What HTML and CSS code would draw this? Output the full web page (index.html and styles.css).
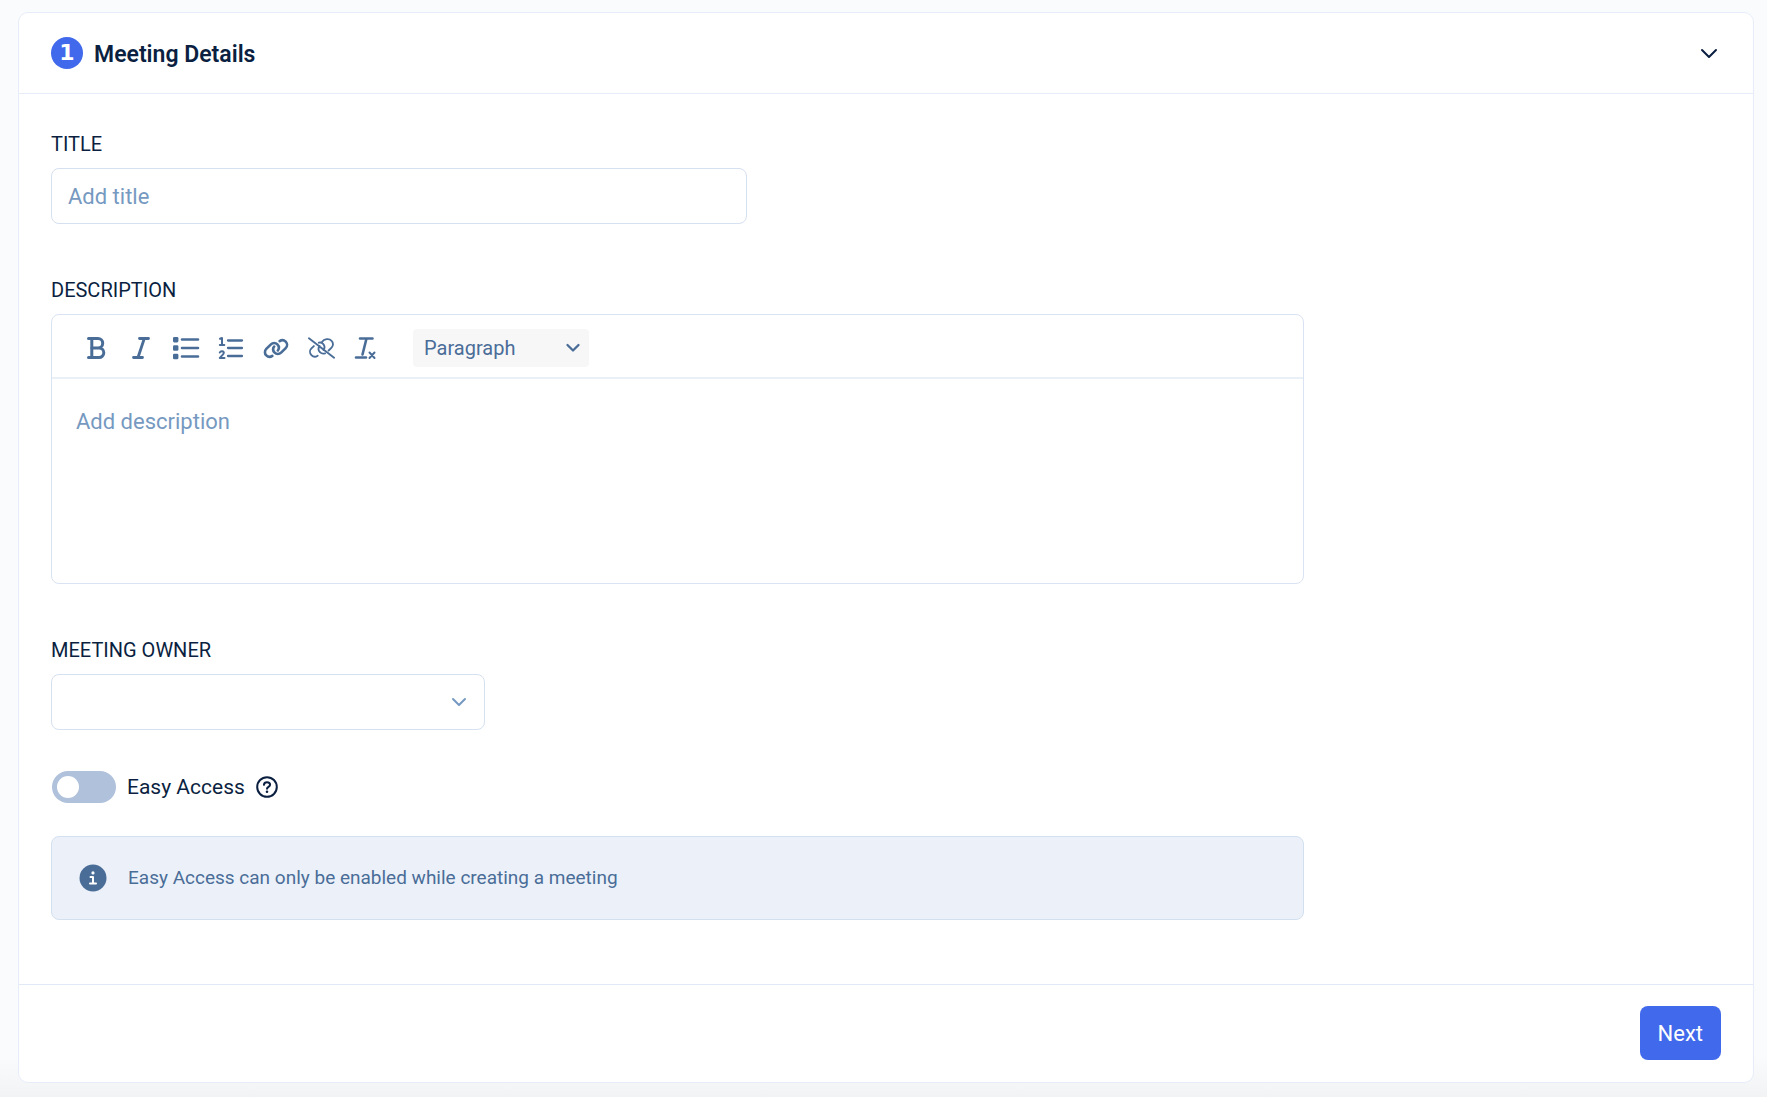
FILE: index.html
```html
<!DOCTYPE html>
<html lang="en">
<head>
<meta charset="utf-8">
<meta name="viewport" content="width=device-width, initial-scale=1">
<title>Meeting Details</title>
<link rel="stylesheet" href="styles.css">
</head>
<body>
<form class="card">
  <header class="card-header">
    <span class="step">1</span>
    <h1 class="card-title">Meeting Details</h1>
    <button class="icon-button collapse" type="button" aria-label="Collapse section">
      <svg width="24" height="24" viewBox="0 0 24 24" stroke-width="2"><path d="M5 9l7 7 7-7"/></svg>
    </button>
  </header>

  <div class="card-body">
    <div class="field">
      <label class="label" for="title">TITLE</label>
      <input class="control title-input" id="title" type="text" placeholder="Add title">
    </div>

    <div class="field">
      <label class="label" for="description">DESCRIPTION</label>
      <div class="editor">
        <div class="toolbar">
          <button class="icon-button tool" type="button" aria-label="Bold">
            <svg width="32" height="32" viewBox="0 0 32 32" stroke-width="3"><path d="M8.500 6.500H18a4.700 4.700 0 0 1 0 9.400H11.500M18 15.900h1a4.800 4.800 0 0 1 0 9.600H8.500M11.800 6.500v19"/></svg>
          </button>
          <button class="icon-button tool" type="button" aria-label="Italic">
            <svg width="32" height="32" viewBox="0 0 32 32" stroke-width="2.800"><path d="M14.500 6.500h9M8.500 25.500h9M19.300 6.500l-6.300 19"/></svg>
          </button>
          <button class="icon-button tool" type="button" aria-label="Bulleted list">
            <svg width="32" height="32" viewBox="0 0 32 32" stroke-width="2.600"><path d="M12 7.500h16M12 16h16M12 24.500h16"/><g fill="currentColor" stroke="none"><rect x="3" y="5" width="5.400" height="5.400" rx="1.300"/><rect x="3" y="13.300" width="5.400" height="5.400" rx="1.300"/><rect x="3" y="21.800" width="5.400" height="5.400" rx="1.300"/></g></svg>
          </button>
          <button class="icon-button tool" type="button" aria-label="Numbered list">
            <svg width="32" height="32" viewBox="0 0 32 32" stroke-width="2.300"><path d="M13 8.500h14M13 16h14M13 24h14"/><path stroke-width="2" d="M5 6.800l2-.800v7M4.800 13h4.500M4.800 20.500c.8-2 4.200-1.700 4 .5-.1 1.300-2.200 2.800-4 5h4.700"/></svg>
          </button>
          <button class="icon-button tool" type="button" aria-label="Insert link">
            <svg width="26" height="21" viewBox="0 0 640 512" stroke-width="64"><path d="M410 74c46-33 109-28 149 12 44 44 44 115 0 159L445 357c-44 44-115 44-159 0-40-40-45-103-12-149"/><path d="M230 438c-46 33-109 28-149-12-44-44-44-115 0-159L195 155c44-44 115-44 159 0 40 40 45 103 12 149"/></svg>
          </button>
          <button class="icon-button tool" type="button" aria-label="Remove link">
            <svg width="27" height="22" viewBox="0 0 640 512" stroke-width="44"><path d="M330 116c52-80 170-96 229-30 44 44 44 115 0 159l-70 70M405 385c-48 12-92 4-119-28-40-40-45-103-12-149M230 438c-46 33-109 28-149-12-44-44-44-115 0-159l58-57M258 130c40-12 76 0 96 25 40 40 45 103 12 149M22 24l596 464"/></svg>
          </button>
          <button class="icon-button tool" type="button" aria-label="Clear formatting">
            <svg width="32" height="32" viewBox="0 0 32 32" stroke-width="2.600"><path d="M10 6.500h12.500M6 25.500h10M16.500 6.500l-4 16"/><path stroke-width="2" d="M19.500 20.500l5 5.500M24.500 20.500l-5 5.500"/></svg>
          </button>
          <span class="style-picker">
            <select class="style-select" aria-label="Text style"><option>Paragraph</option></select>
            <svg class="select-arrow" width="16" height="16" viewBox="0 0 16 16" stroke-width="2.300"><path d="M2.500 5l5.500 5.500L13.500 5"/></svg>
          </span>
        </div>
        <textarea class="editor-text" id="description" placeholder="Add description"></textarea>
      </div>
    </div>

    <div class="field">
      <label class="label" for="owner">MEETING OWNER</label>
      <span class="owner-picker">
        <select class="control owner-select" id="owner"><option></option></select>
        <svg class="select-arrow" width="16" height="16" viewBox="0 0 16 16" stroke-width="2"><path d="M2 5l6 6 6-6"/></svg>
      </span>
    </div>

    <div class="access">
      <input class="switch" id="easy-access" type="checkbox" role="switch">
      <label class="access-label" for="easy-access">Easy Access</label>
      <button class="icon-button help" type="button" aria-label="About Easy Access">
        <svg width="22" height="22" viewBox="0 0 22 22" stroke-width="2"><circle cx="11" cy="11" r="9.800"/><path d="M7.900 8.800c.2-1.700 1.300-2.500 3.100-2.500 1.900 0 3.100 1 3.100 2.500 0 2-3.100 2.100-3.100 4"/><circle cx="11" cy="15.800" r="1.300" fill="currentColor" stroke="none"/></svg>
      </button>
    </div>

    <div class="notice">
      <svg width="28" height="28" viewBox="0 0 28 28" stroke-width="2"><circle cx="14" cy="14" r="13.500" fill="currentColor" stroke="none"/><g class="notice-mark"><path d="M11.500 13H14v6.500M11 19.500h6"/><circle cx="14" cy="8.900" r="1.600"/></g></svg>
      <p class="notice-text">Easy Access can only be enabled while creating a meeting</p>
    </div>
  </div>

  <footer class="card-footer">
    <button class="next" type="button">Next</button>
  </footer>
</form>
</body>
</html>
```
FILE: styles.css
```css
* {
  box-sizing: border-box;
}

html {
  min-height: 100%;
  background: linear-gradient(to top, #f2f3f5, #fafbfd 40px);
}

body {
  margin: 12px 13px 14px 18px;
  font-family: Roboto, "Liberation Sans", sans-serif;
  font-size: 22px;
  line-height: 28px;
  color: #0b1f41;
}

svg {
  display: block;
  flex: none;
  fill: none;
  stroke: currentColor;
  stroke-linecap: round;
  stroke-linejoin: round;
}

button,
input,
select,
textarea {
  font: inherit;
  color: inherit;
}

.card {
  background: #fff;
  border: 1px solid #e6edf9;
  border-radius: 10px;
}

.card-header {
  display: flex;
  align-items: center;
  gap: 11px;
  height: 81px;
  padding: 0 32px;
  border-bottom: 1px solid #e6edf9;
}

.step {
  width: 32px;
  height: 32px;
  border-radius: 50%;
  background: #4169eb;
  color: #fff;
  font: bold 22px/32px "DejaVu Sans", sans-serif;
  text-align: center;
}

.card-title {
  margin: 0;
  padding-top: 3px;
  font-size: 23px;
  font-weight: 600;
}

.icon-button {
  display: flex;
  align-items: center;
  justify-content: center;
  padding: 0;
  border: 0;
  background: none;
}

.collapse {
  margin-left: auto;
}

.card-body {
  padding: 36px 32px 64px;
}

.field {
  margin-bottom: 52px;
}

.label {
  display: block;
  margin-bottom: 10px;
  font-size: 20px;
  line-height: 28px;
}

.control {
  display: block;
  height: 56px;
  padding: 0 16px;
  border: 1px solid #d5e0f0;
  border-radius: 8px;
  background: #fff;
}

.title-input {
  width: calc(100% * 5 / 12);
}

::placeholder {
  color: #7699c1;
  opacity: 1;
}

.editor {
  width: 75%;
  border: 1px solid #d9e3f3;
  border-radius: 8px;
}

.toolbar {
  display: flex;
  align-items: center;
  gap: 13px;
  height: 64px;
  padding: 4px 28px 0;
  border-bottom: 2px solid #e9f0f8;
  color: #4a6d98;
}

.tool {
  width: 32px;
  height: 32px;
}

.style-picker {
  position: relative;
  width: 176px;
  margin-left: 18px;
}

.style-select {
  display: block;
  width: 100%;
  height: 38px;
  padding: 0 11px;
  border: 0;
  border-radius: 4px;
  background: #f7f7f8;
  font-size: 20px;
  appearance: none;
}

.select-arrow {
  position: absolute;
  top: 50%;
  right: 8px;
  margin-top: -8px;
  pointer-events: none;
}

.editor-text {
  display: block;
  width: 100%;
  height: 204px;
  padding: 29px 24px;
  border: 0;
  border-radius: 8px;
  background: none;
  resize: none;
}

.owner-picker {
  position: relative;
  display: block;
  width: 26%;
  color: #7699c1;
}

.owner-select {
  width: 100%;
  appearance: none;
}

.owner-picker .select-arrow {
  right: 18px;
}

.access {
  display: flex;
  align-items: center;
  gap: 11px;
  margin: -11px 0 33px;
}

.access-label {
  font-size: 21px;
}

.switch {
  flex: none;
  width: 64px;
  height: 32px;
  margin: 0 0 0 1px;
  padding: 5px;
  border-radius: 16px;
  background: #b0c1dc;
  appearance: none;
}

.switch::before {
  content: "";
  display: block;
  width: 22px;
  height: 22px;
  border-radius: 50%;
  background: #fff;
}

.switch:checked {
  background: #4169eb;
}

.switch:checked::before {
  margin-left: auto;
}

.notice {
  display: flex;
  align-items: center;
  gap: 21px;
  width: 75%;
  height: 84px;
  padding: 0 27px;
  border: 1px solid #d3e0f0;
  border-radius: 8px;
  background: #ecf1f9;
  color: #4a6d98;
}

.notice-mark {
  fill: #fff;
  stroke: none;
}

.notice-mark path {
  fill: none;
  stroke: #fff;
}

.notice-text {
  margin: 0;
  font-size: 19px;
}

.card-footer {
  display: flex;
  justify-content: flex-end;
  padding: 21px 32px 22px;
  border-top: 1px solid #e1e9f6;
}

.next {
  height: 54px;
  padding: 2px 18px 0;
  border: 0;
  border-radius: 8px;
  background: #4169eb;
  color: #fff;
}
```
